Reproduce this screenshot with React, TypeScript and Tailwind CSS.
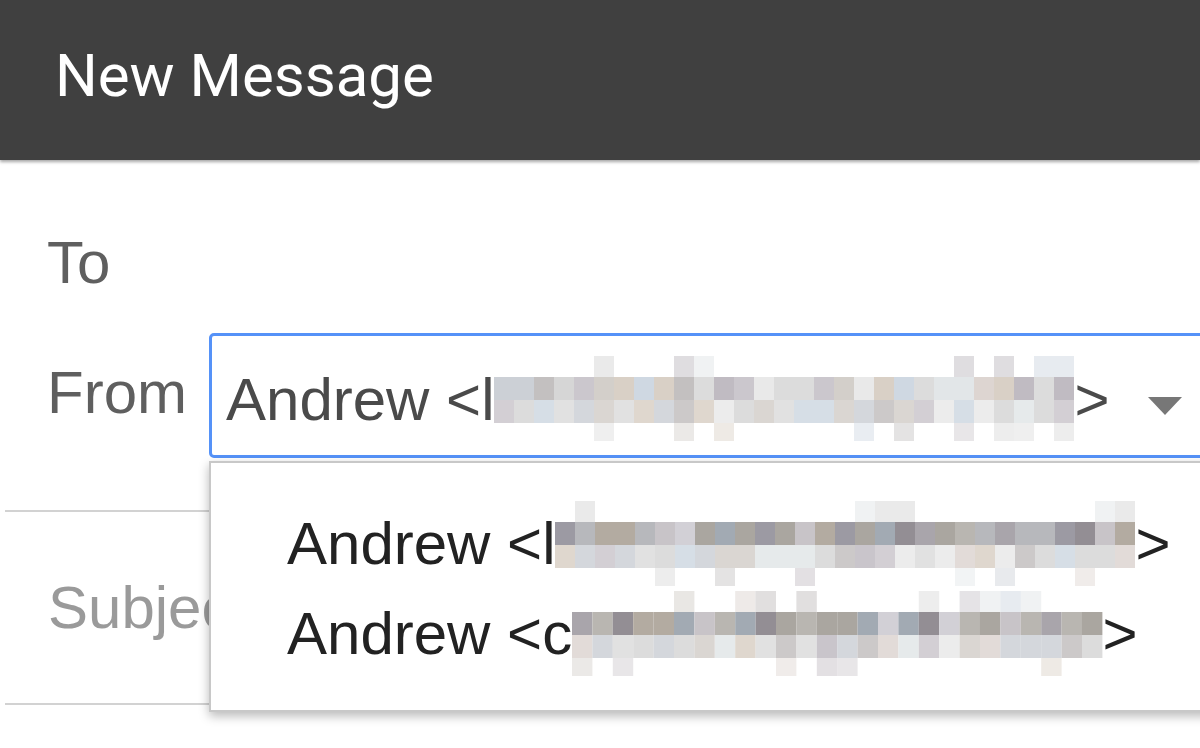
import React from "react"

const LIGHT = ["#d6d6d6", "#cbc7cd", "#d9d0c6", "#cfd8e2", "#c3c0c0", "#dcdcdc", "#ccd0d6", "#e9e9e9", "#ddd5d1", "#c0bbc2", "#e2e6e8", "#d3cfca"]
const DARK = ["#a9a5ab", "#938e94", "#b3aba1", "#a2aab3", "#b9b6b1", "#c8c4c8", "#9c9aa3", "#b7b8bc", "#aaa6a0", "#d2d0d6"]

function rng(seed: number) {
  let s = seed
  return () => {
    s = (s * 9301 + 49297) % 233280
    return s / 233280
  }
}

// pixelated block standing in for a redacted address
function Mosaic({ cols, seed, dark = false, cell = 20 }: { cols: number; seed: number; dark?: boolean; cell?: number }) {
  const r = rng(seed)
  const main = dark ? DARK : LIGHT
  const rects: React.ReactNode[] = []
  for (let c = 0; c < cols; c++) {
    const x = c * cell
    if (r() < 0.25) rects.push(<rect key={`t${c}`} x={x} y={0} width={cell} height={21} fill={LIGHT[Math.floor(r() * LIGHT.length)]} opacity={0.5} />)
    rects.push(<rect key={`a${c}`} x={x} y={21} width={cell} height={23} fill={main[Math.floor(r() * main.length)]} />)
    rects.push(<rect key={`b${c}`} x={x} y={44} width={cell} height={23} fill={LIGHT[Math.floor(r() * LIGHT.length)]} opacity={0.85} />)
    if (r() < 0.2) rects.push(<rect key={`u${c}`} x={x} y={67} width={cell} height={18} fill={LIGHT[Math.floor(r() * LIGHT.length)]} opacity={0.45} />)
  }
  return (
    <svg width={cols * cell} height={86} viewBox={`0 0 ${cols * cell} 86`} className="block shrink-0">
      {rects}
    </svg>
  )
}

export default function App() {
  return (
    <div className="relative h-[748px] w-[1200px] overflow-hidden bg-white font-['Liberation_Sans',Arial,sans-serif]">
      {/* Header */}
      <div className="relative z-10 h-[160px] bg-[#404040] pl-[55px] pt-[40px] shadow-[0_2px_3px_rgba(0,0,0,0.35)]">
        <span className="font-['Roboto',sans-serif] text-[60px] leading-[72px] text-white">New Message</span>
      </div>

      <div className="pt-[68px]">
        <div className="pl-[47px] text-[60px] leading-[69px] text-[#5f5f5f]">To</div>

        <div className="mt-[36px] flex items-start">
          <div className="w-[209px] shrink-0 pl-[47px] pt-[25px] text-[60px] leading-[69px] text-[#5f5f5f]">From</div>
          <div className="flex h-[125px] w-[1020px] shrink-0 items-start rounded-[5px] border-[3px] border-[#5592f8] pl-[14px] pt-[20px]">
            <div className="flex items-center text-[60px] leading-[69px] text-[#4a4a4a]">
              <span>Andrew &lt;l</span>
              <Mosaic cols={29} seed={7} />
              <span>&gt;</span>
            </div>
            <svg width="34" height="18" viewBox="0 0 34 18" className="ml-[38px] mt-[41px] shrink-0">
              <path d="M0 0 L34 0 L17 18 Z" fill="#777" />
            </svg>
          </div>
        </div>

        <div className="ml-[5px] mt-[52px] h-[2px] bg-[#d2d2d2]" />
        <div className="mt-[61px] pl-[48px] text-[60px] leading-[69px] text-[#9a9a9a]">Subject</div>
        <div className="ml-[5px] mt-[61px] h-[2px] bg-[#d2d2d2]" />
      </div>

      {/* From dropdown menu */}
      <div className="absolute left-[209px] top-[461px] z-20 h-[251px] w-[1020px] border-2 border-[#c8c8c8] bg-white pl-[76px] pt-[36px] shadow-[0_4px_10px_rgba(0,0,0,0.28)]">
        <div className="flex items-center text-[60px] leading-[90px] text-[#222]">
          <span>Andrew &lt;l</span>
          <Mosaic cols={29} seed={31} dark />
          <span>&gt;</span>
        </div>
        <div className="flex items-center text-[60px] leading-[90px] text-[#222]">
          <span>Andrew &lt;c</span>
          <Mosaic cols={26} seed={53} dark cell={20.4} />
          <span>&gt;</span>
        </div>
      </div>
    </div>
  )
}
